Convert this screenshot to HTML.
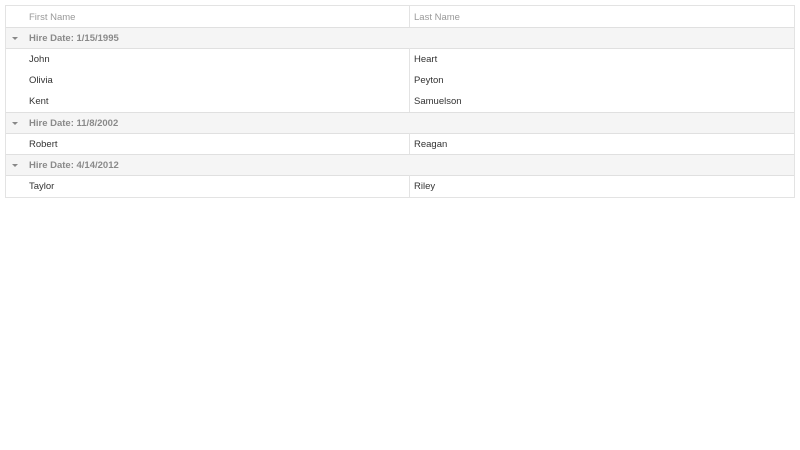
<!DOCTYPE html>
<html><head><style>
body{margin:0;width:800px;height:450px;background:#fff;font-family:"Segoe UI","Liberation Sans",sans-serif;font-size:9.5px;color:#333;position:relative;overflow:hidden}
.r{position:absolute;left:5px;width:790px;box-sizing:border-box;border-left:1px solid #e3e3e3;border-right:1px solid #e3e3e3}
.t{position:absolute;top:50%;transform:translateY(-45%);white-space:nowrap}
.c1{left:23px}.c2{left:408px}
.div{position:absolute;left:403px;top:0;bottom:0;border-left:1px solid #e3e3e3}
.grp{background:#f5f5f5;border-top:1px solid #e0e0e0;border-bottom:1px solid #e0e0e0;font-weight:bold;color:#8a8a8a}
.tri{position:absolute;left:6px;top:50%;margin-top:-1px;width:0;height:0;border-left:3px solid transparent;border-right:3px solid transparent;border-top:3px solid #888}
</style></head><body>
<div class="r" style="top:5px;height:23px;border-top:1px solid #e3e3e3;border-bottom:1px solid #dcdcdc;color:#999"><span class="t c1">First Name</span><div class="div"></div><span class="t c2">Last Name</span></div>
<div class="r grp" style="top:27px;height:22px"><div class="tri"></div><span class="t c1">Hire Date: 1/15/1995</span></div>
<div class="r" style="top:48px;height:64px"><div class="div"></div>
<span class="t c1" style="top:11px">John</span><span class="t c2" style="top:11px">Heart</span>
<span class="t c1" style="top:32px">Olivia</span><span class="t c2" style="top:32px">Peyton</span>
<span class="t c1" style="top:53px">Kent</span><span class="t c2" style="top:53px">Samuelson</span></div>
<div class="r grp" style="top:112px;height:22px"><div class="tri"></div><span class="t c1">Hire Date: 11/8/2002</span></div>
<div class="r" style="top:133px;height:22px"><div class="div"></div><span class="t c1">Robert</span><span class="t c2">Reagan</span></div>
<div class="r grp" style="top:154px;height:22px"><div class="tri"></div><span class="t c1">Hire Date: 4/14/2012</span></div>
<div class="r" style="top:175px;height:23px;border-bottom:1px solid #e3e3e3"><div class="div"></div><span class="t c1">Taylor</span><span class="t c2">Riley</span></div>
</body></html>
